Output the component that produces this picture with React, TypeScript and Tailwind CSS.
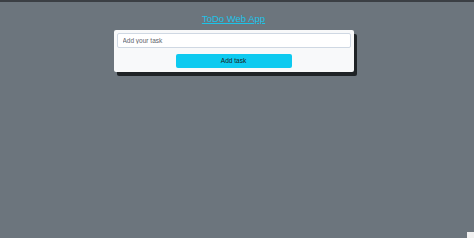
export default function App() {
  return (
    <div className="h-[238px] w-[474px] bg-[#6c757d] border-t-2 border-[#3b3f44] font-['Liberation_Sans',Arial,sans-serif] overflow-hidden relative">
      <div className="w-[467px] flex flex-col items-center">
        <h1 className="mt-[10px] text-[9.5px] leading-[13px] text-[#1cc3e8] underline">ToDo Web App</h1>
        <div className="mt-[5px] w-[240px] bg-[#f8f9fa] rounded-[2px] shadow-[3px_4px_0_#1f2326] px-[3px] pt-[3px] pb-[4px] flex flex-col items-center gap-[6px]">
          <input
            placeholder="Add your task"
            className="w-full h-[15px] rounded-[2px] border border-[#cfd8e3] bg-white px-[5px] text-[6.5px] placeholder-[#5f666d] outline-none"
          />
          <button className="w-[116px] h-[14px] rounded-[2px] bg-[#0dcaf0] text-[6.5px] text-[#1a1a1a]">Add task</button>
        </div>
      </div>
      <div className="absolute right-0 bottom-0 w-[7px] h-[6px] bg-[#f0f0f0]" />
    </div>
  )
}
